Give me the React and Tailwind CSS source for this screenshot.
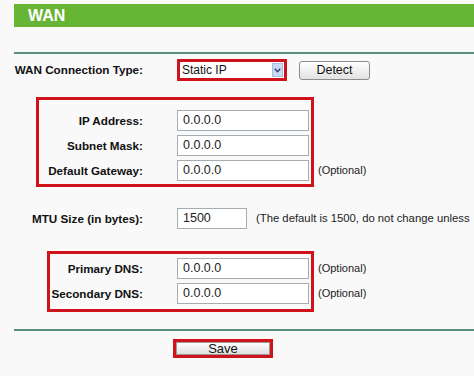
import React from 'react';

const font = { fontFamily: '"Liberation Sans", Arial, sans-serif' };

const Field = ({ value, width = 'w-[132px]' }) => (
  <div className={`${width} h-[21px] flex items-center bg-white border border-[#a5acb2] pl-[5px] text-[12.5px] text-[#222]`}>
    {value}
  </div>
);

const Label = ({ children, width }) => (
  <div className={`${width} shrink-0 text-right text-[11.7px] font-bold text-[#111] whitespace-nowrap`}>
    {children}
  </div>
);

const Note = ({ children }) => (
  <div className="h-[25px] flex items-center text-[11px] text-[#222] whitespace-nowrap">{children}</div>
);

const App = () => {
  return (
    <div className="w-[474px] h-[376px] overflow-hidden bg-[#f9f9f9] pt-[4px] pl-[14px]" style={font}>
      {/* title bar */}
      <div className="h-[23px] bg-[#66b535] flex items-center pl-[14px]">
        <span className="text-white font-bold text-[16px]">WAN</span>
      </div>

      <div className="mt-[25px] h-[2px] bg-[#5b8f7d]" />

      {/* connection type */}
      <div className="mt-[5px] h-[22px] flex items-center">
        <Label width="w-[129px]">WAN Connection Type:</Label>
        <div className="ml-[34px] w-[110px] h-[22px] border-[3px] border-[#d0121b] bg-white flex items-center">
          <span className="pl-[2px] text-[12px] text-[#111] flex-1">Static IP</span>
          <span className="mr-[1px] w-[11px] h-[14px] bg-[#c9d9f2] border border-[#a8bde0] flex items-center justify-center">
            <svg width="7" height="5" viewBox="0 0 7 5">
              <path d="M0.8 0.8 L3.5 3.8 L6.2 0.8" fill="none" stroke="#2a3f7a" strokeWidth="1.4" />
            </svg>
          </span>
        </div>
        <button className="ml-[12px] w-[71px] h-[19px] rounded-[3px] border border-[#8d8d8d] bg-gradient-to-b from-white to-[#e2e2e2] text-[12.5px] text-[#111] flex items-center justify-center">
          Detect
        </button>
      </div>

      {/* static ip block */}
      <div className="mt-[16px] ml-[22px] flex items-start">
        <div className="w-[278px] h-[90px] border-[3px] border-[#d0121b] pt-[8px]">
          {[
            ['IP Address:', '0.0.0.0'],
            ['Subnet Mask:', '0.0.0.0'],
            ['Default Gateway:', '0.0.0.0'],
          ].map(([label, value]) => (
            <div key={label} className="h-[25px] flex items-center">
              <Label width="w-[104px]">{label}</Label>
              <div className="ml-[34px]">
                <Field value={value} />
              </div>
            </div>
          ))}
        </div>
        <div className="ml-[4px] pt-[11px]">
          <Note />
          <Note />
          <Note>(Optional)</Note>
        </div>
      </div>

      {/* mtu */}
      <div className="mt-[21px] h-[21px] flex items-center">
        <Label width="w-[129px]">MTU Size (in bytes):</Label>
        <div className="ml-[34px]">
          <Field value="1500" width="w-[70px]" />
        </div>
        <span className="ml-[9px] text-[11.3px] text-[#222] whitespace-nowrap">
          (The default is 1500, do not change unless
        </span>
      </div>

      {/* dns block */}
      <div className="mt-[22px] ml-[33px] flex items-start">
        <div className="w-[267px] h-[61px] border-[3px] border-[#d0121b] pt-[2px]">
          {[
            ['Primary DNS:', '0.0.0.0'],
            ['Secondary DNS:', '0.0.0.0'],
          ].map(([label, value]) => (
            <div key={label} className="h-[25px] flex items-center">
              <Label width="w-[93px]">{label}</Label>
              <div className="ml-[34px]">
                <Field value={value} />
              </div>
            </div>
          ))}
        </div>
        <div className="ml-[4px] pt-[5px]">
          <Note>(Optional)</Note>
          <Note>(Optional)</Note>
        </div>
      </div>

      <div className="mt-[17px] h-[2px] bg-[#5b8f7d]" />

      {/* save */}
      <div className="mt-[8px] ml-[159px] w-[100px] h-[19px] border-[3px] border-[#d0121b] flex">
        <button className="flex-1 border border-[#9a9a9a] bg-gradient-to-b from-white to-[#e0e0e0] text-[13px] text-[#111] flex items-center justify-center leading-none">
          Save
        </button>
      </div>
    </div>
  );
};

export default App;
